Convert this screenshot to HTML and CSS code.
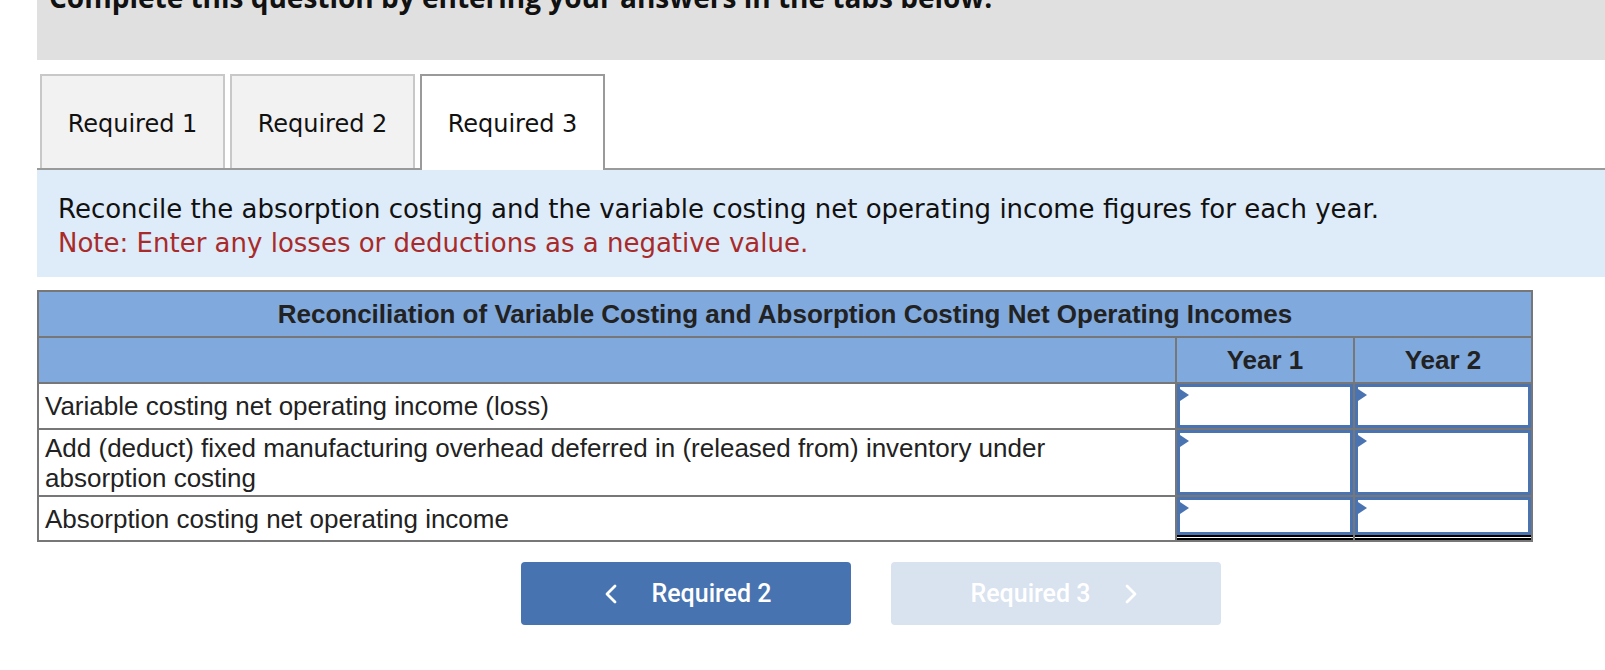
FILE: index.html
```html
<!DOCTYPE html>
<html lang="en">
<head>
<meta charset="utf-8">
<title>Reconciliation</title>
<link rel="stylesheet" href="styles.css">
</head>
<body>
<div class="banner">
  <div class="banner-text">Complete this question by entering your answers in the tabs below.</div>
</div>

<div class="tabs">
  <div class="tab">Required 1</div>
  <div class="tab">Required 2</div>
  <div class="tab active">Required 3</div>
</div>

<div class="instructions">
  <p>Reconcile the absorption costing and the variable costing net operating income figures for each year.</p>
  <p class="note">Note: Enter any losses or deductions as a negative value.</p>
</div>

<table class="recon">
  <tr class="r-title">
    <th colspan="3" class="title">Reconciliation of Variable Costing and Absorption Costing Net Operating Incomes</th>
  </tr>
  <tr class="r-years">
    <th class="blank"></th>
    <th class="year">Year 1</th>
    <th class="year">Year 2</th>
  </tr>
  <tr class="r-one">
    <td class="label">Variable costing net operating income (loss)</td>
    <td class="cell"><div class="input h1"></div></td>
    <td class="cell"><div class="input h1"></div></td>
  </tr>
  <tr class="r-two">
    <td class="label">Add (deduct) fixed manufacturing overhead deferred in (released from) inventory under<br>absorption costing</td>
    <td class="cell"><div class="input h2"></div></td>
    <td class="cell"><div class="input h2"></div></td>
  </tr>
  <tr class="r-three">
    <td class="label">Absorption costing net operating income</td>
    <td class="cell"><div class="total-wrap"><div class="input h3"></div></div></td>
    <td class="cell"><div class="total-wrap"><div class="input h3"></div></div></td>
  </tr>
</table>

<div class="nav">
  <button class="nav-btn prev" type="button">
    <svg class="chev" width="12" height="20" viewBox="0 0 12 20"><polyline points="10,2 2,10 10,18" fill="none" stroke="#fff" stroke-width="2.8" stroke-linecap="round" stroke-linejoin="round"/></svg>
    <span>Required 2</span>
  </button>
  <button class="nav-btn next" type="button" disabled>
    <span>Required 3</span>
    <svg class="chev" width="12" height="20" viewBox="0 0 12 20"><polyline points="2,2 10,10 2,18" fill="none" stroke="#fff" stroke-width="2.8" stroke-linecap="round" stroke-linejoin="round"/></svg>
  </button>
</div>
</body>
</html>
```

FILE: styles.css
```css
html, body {
  margin: 0;
  padding: 0;
  background: #ffffff;
}

body {
  font-family: "DejaVu Sans", Verdana, sans-serif;
  color: #111;
}

.banner {
  margin-left: 37px;
  height: 60px;
  background: #e0e0e0;
  overflow: hidden;
}

.banner-text {
  font-family: "Open Sans", "DejaVu Sans", sans-serif;
  font-weight: 700;
  font-size: 28px;
  line-height: 28px;
  margin-top: -17px;
  padding-left: 12px;
  color: #111;
  white-space: nowrap;
}

.tabs {
  margin: 14px 0 0 37px;
  padding-left: 3px;
  height: 94px;
  display: flex;
  gap: 5px;
  border-bottom: 2px solid #9a9a9a;
}

.tab {
  width: 185px;
  box-sizing: border-box;
  border: 2px solid #c8c8c8;
  border-bottom: none;
  background: #f2f2f2;
  display: flex;
  align-items: center;
  justify-content: center;
  padding-top: 4px;
  font-size: 24px;
  color: #111;
}

.tab.active {
  background: #ffffff;
  border-color: #9a9a9a;
  margin-bottom: -2px;
  padding-bottom: 2px;
}

.instructions {
  margin-left: 37px;
  height: 107px;
  box-sizing: border-box;
  padding: 22px 0 0 21px;
  background: #deebf8;
  font-size: 26px;
  line-height: 34px;
  color: #111;
}

.instructions p {
  margin: 0;
}

.instructions .note {
  color: #a82a2a;
}

.recon {
  margin: 13px 0 0 37px;
  width: 1496px;
  border-collapse: collapse;
  font-family: "Liberation Sans", Arial, sans-serif;
  font-size: 26px;
  color: #222;
}

.recon th {
  background: #80a9dd;
  border: 2px solid #777;
  font-weight: 700;
  padding: 0;
}

.recon .title {
  text-align: center;
}

.r-title { height: 46px; }
.r-years { height: 46px; }
.r-one { height: 46px; }
.r-two { height: 67px; }
.r-three { height: 45px; }

.recon .year {
  width: 176px;
}

.recon td {
  border: 2px solid #777;
  padding: 0;
}

.recon .label {
  padding: 0 6px;
  line-height: 30px;
  vertical-align: middle;
}

.recon .cell {
  vertical-align: top;
}

.total-wrap {
  border-bottom: 5px double #000;
}

.input {
  position: relative;
  box-sizing: border-box;
  border: 3px solid #4a73b1;
  background: #fff;
}

.input::before {
  content: "";
  position: absolute;
  left: 0;
  top: 2px;
  border-left: 9px solid #4a73b1;
  border-top: 6px solid transparent;
  border-bottom: 6px solid transparent;
}

.input.h1 { height: 44px; }
.input.h2 { height: 65px; }
.input.h3 { height: 38px; }

.nav {
  display: flex;
  gap: 40px;
  margin: 20px 0 0 521px;
}

.nav-btn {
  width: 330px;
  height: 63px;
  border: none;
  border-radius: 4px;
  display: flex;
  align-items: center;
  justify-content: center;
  gap: 34px;
  font-family: Roboto, "Liberation Sans", sans-serif;
  font-weight: 500;
  font-size: 25px;
  color: #fff;
  padding: 0;
}

.nav-btn.prev {
  background: #4773b1;
  padding-left: 5px;
}

.nav-btn.next {
  background: #d9e2ef;
  padding-right: 5px;
}

.chev {
  display: block;
}
```
